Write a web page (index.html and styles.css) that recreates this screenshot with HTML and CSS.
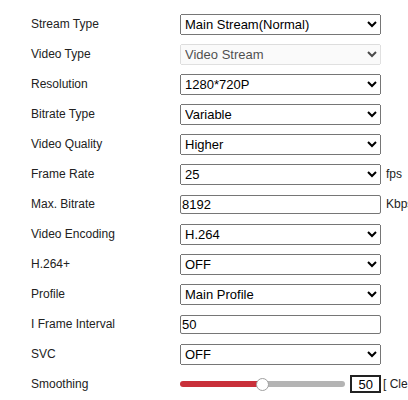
FILE: index.html
```html
<!DOCTYPE html>
<html lang="en">
<head>
    <meta charset="UTF-8">
    <meta name="viewport" content="width=device-width, initial-scale=1.0">
    <title>Video Settings</title>
    <link rel="stylesheet" href="styles.css">
</head>
<body>
    <div class="settings">
        <div class="row">
            <label class="label">Stream Type</label>
            <select class="field"><option>Main Stream(Normal)</option></select>
        </div>
        <div class="row">
            <label class="label">Video Type</label>
            <select class="field" disabled><option>Video Stream</option></select>
        </div>
        <div class="row">
            <label class="label">Resolution</label>
            <select class="field"><option>1280*720P</option></select>
        </div>
        <div class="row">
            <label class="label">Bitrate Type</label>
            <select class="field"><option>Variable</option></select>
        </div>
        <div class="row">
            <label class="label">Video Quality</label>
            <select class="field"><option>Higher</option></select>
        </div>
        <div class="row">
            <label class="label">Frame Rate</label>
            <select class="field"><option>25</option></select>
            <span class="unit">fps</span>
        </div>
        <div class="row">
            <label class="label">Max. Bitrate</label>
            <input class="field text" type="text" value="8192">
            <span class="unit">Kbps</span>
        </div>
        <div class="row">
            <label class="label">Video Encoding</label>
            <select class="field"><option>H.264</option></select>
        </div>
        <div class="row">
            <label class="label">H.264+</label>
            <select class="field"><option>OFF</option></select>
        </div>
        <div class="row">
            <label class="label">Profile</label>
            <select class="field"><option>Main Profile</option></select>
        </div>
        <div class="row">
            <label class="label">I Frame Interval</label>
            <input class="field text" type="text" value="50">
        </div>
        <div class="row">
            <label class="label">SVC</label>
            <select class="field"><option>OFF</option></select>
        </div>
        <div class="row">
            <label class="label">Smoothing</label>
            <div class="slider-group">
                <input class="slider" type="range" min="0" max="100" value="50">
                <input class="slider-value" type="text" value="50">
                <span class="hint">[ Clear &lt;-&gt; Smooth ]</span>
            </div>
        </div>
    </div>
</body>
</html>
```

FILE: styles.css
```css
body {
    margin: 0;
    background-color: #ffffff;
    font-family: "Liberation Sans", Arial, sans-serif;
    overflow: hidden;
}

.settings {
    padding: 9px 0 0 31px;
}

.row {
    display: flex;
    align-items: center;
    height: 30px;
    white-space: nowrap;
}

.label {
    width: 149px;
    flex: none;
    font-size: 12px;
    color: #222;
}

.field {
    width: 201px;
    flex: none;
    box-sizing: border-box;
    font-family: "Liberation Sans", Arial, sans-serif;
    font-size: 13px;
    color: #000;
    margin: 0;
}

select.field {
    height: 21px;
}

.field.text {
    height: 19px;
    padding: 1px 1px;
    border: 1px solid #767676;
    border-radius: 2px;
}

.unit {
    margin-left: 5px;
    font-size: 12px;
    color: #222;
}

/* Smoothing slider */
.slider-group {
    display: flex;
    align-items: center;
}

.slider {
    -webkit-appearance: none;
    appearance: none;
    width: 165px;
    height: 6px;
    margin: 0;
    border-radius: 3px;
    background: linear-gradient(to right, #c9303a 0%, #c9303a 50%, #b4b4b4 50%, #b4b4b4 100%);
    outline: none;
}

.slider::-webkit-slider-thumb {
    -webkit-appearance: none;
    width: 13px;
    height: 13px;
    border-radius: 50%;
    background: #ffffff;
    border: 1px solid #a0a0a0;
    box-sizing: border-box;
}

.slider-value {
    width: 31px;
    height: 18px;
    box-sizing: border-box;
    margin-left: 5px;
    padding: 0 6px 0 0;
    border: 2px solid #222;
    text-align: right;
    font-family: "Liberation Sans", Arial, sans-serif;
    font-size: 13px;
    color: #000;
}

.hint {
    margin-left: 2px;
    font-size: 12px;
    color: #222;
}
```
